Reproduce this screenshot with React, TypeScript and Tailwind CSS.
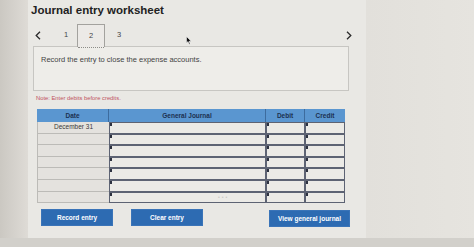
import React from "react";

const rows = [0, 1, 2, 3, 4, 5, 6];

function InputCell({ width, last }: { width: string; last?: boolean }) {
  return (
    <div className={`relative h-full ${width} border border-[#5d6373] bg-[#ebeae6]`}>
      <span className="absolute left-0 top-0 h-[3px] w-[2px] bg-[#2d3240]" />
      {last ? (
        <span className="absolute bottom-[1px] left-[108px] text-[5px] tracking-[2px] text-[#c9c8c4]">•••</span>
      ) : null}
    </div>
  );
}

function ActionButton({ label, width }: { label: string; width: string }) {
  return (
    <button
      className={`flex h-[15px] ${width} items-center justify-center bg-[#2d6bb2] text-[6.5px] font-bold text-white shadow-[0_0_0_1px_#3a74b8]`}
    >
      {label}
    </button>
  );
}

function Chevron({ dir }: { dir: "left" | "right" }) {
  return (
    <svg width="6" height="9" viewBox="0 0 6 9" fill="none" stroke="#2b2b2b" strokeWidth="1.3">
      <path d={dir === "left" ? "M5 0.8 L1.2 4.5 L5 8.2" : "M1 0.8 L4.8 4.5 L1 8.2"} />
    </svg>
  );
}

export default function App() {
  return (
    <div
      className="flex h-[247px] w-[474px] flex-col overflow-hidden bg-[#d4d2cd]"
      style={{ fontFamily: '"Liberation Sans", Arial, sans-serif' }}
    >
      <div className="flex h-[238px]">
        <div className="w-[28px] bg-gradient-to-r from-[#cbc8c2] to-[#dedbd6]" />

        <div className="relative w-[338px] bg-[#e9e8e4]">
          <h1 className="pl-[3px] pt-[3px] text-[11.5px] font-bold leading-[14px] text-[#222]">
            Journal entry worksheet
          </h1>

          <div className="mt-[7px] flex h-[22px] items-center text-[7.5px] text-[#444]">
            <span className="ml-[7px] flex w-[8px]">
              <Chevron dir="left" />
            </span>
            <span className="ml-[21px] w-[6px]">1</span>
            <div className="relative ml-[7px] flex h-[23px] w-[28px] items-center justify-center border-x border-t border-[#a3a29e] bg-[#eceae7]">
              2
              <span className="absolute -bottom-px left-0 right-0 border-b border-dotted border-[#8d8c88]" />
            </div>
            <span className="ml-[12px]">3</span>
            <span className="ml-auto mr-[14px] flex">
              <Chevron dir="right" />
            </span>
          </div>

          <div className="ml-[5px] h-[45px] w-[316px] border border-[#c7c6c2] bg-[#eeede9] pl-[7px] pt-[7px] text-[7.5px] text-[#444]">
            Record the entry to close the expense accounts.
          </div>

          <p className="ml-[8px] mt-[4px] text-[5.8px] leading-[7px] text-[#c0525e]">
            Note: Enter debits before credits.
          </p>

          <div className="ml-[9px] mt-[7px] w-[308px]">
            <div className="flex h-[13px] bg-[#5a96d0] text-[6.5px] font-semibold text-[#1c3150]">
              <div className="flex w-[72px] items-center justify-center border-r border-[#3d6c9e]">Date</div>
              <div className="flex w-[157px] items-center justify-center border-r border-[#3d6c9e]">General Journal</div>
              <div className="flex w-[39px] items-center justify-center border-r border-[#3d6c9e]">Debit</div>
              <div className="flex flex-1 items-center justify-center">Credit</div>
            </div>
            {rows.map((r) => (
              <div key={r} className="flex h-[11.6px]">
                <div className="flex w-[72px] items-center justify-center border-b border-l border-[#bcbbb7] bg-[#e4e2de] text-[6.5px] text-[#3a3a3a]">
                  {r === 0 ? "December 31" : ""}
                </div>
                <InputCell width="w-[157px]" last={r === 6} />
                <InputCell width="w-[39px]" />
                <InputCell width="w-[40px]" />
              </div>
            ))}
          </div>

          <div className="mt-[7px] flex">
            <div className="ml-[14px]">
              <ActionButton label="Record entry" width="w-[70px]" />
            </div>
            <div className="ml-[20px]">
              <ActionButton label="Clear entry" width="w-[70px]" />
            </div>
            <div className="ml-[68px] mt-[1px]">
              <ActionButton label="View general journal" width="w-[79px]" />
            </div>
          </div>

          <svg className="absolute left-[158px] top-[36px]" width="6" height="9" viewBox="0 0 6 9">
            <path d="M0.5 0.5 L0.5 7 L2 5.6 L3.2 8.3 L4.2 7.9 L3 5.2 L5.2 5.2 Z" fill="#111" stroke="#fff" strokeWidth="0.5" />
          </svg>
        </div>

        <div className="flex-1 bg-gradient-to-r from-[#e2e0db] to-[#e6e4df]" />
      </div>
      <div className="flex-1 bg-[#d2d0cb]" />
    </div>
  );
}
